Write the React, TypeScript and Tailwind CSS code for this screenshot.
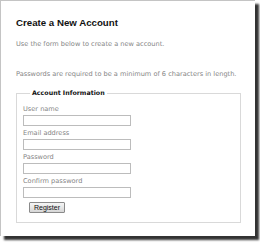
export default function App() {
  const fields = ["User name", "Email address", "Password", "Confirm password"];

  return (
    <div className="w-[260px] h-[245px] bg-white">
      <div className="w-[255px] h-[236px] bg-white border-l border-t border-[#c4c4c4] shadow-[4px_4px_2px_rgba(0,0,0,0.8)] pl-[15px] pt-[17px]">
        <h1 className="text-[9.7px] leading-[10px] font-bold text-[#111] font-['Liberation_Sans',Arial,sans-serif]">
          Create a New Account
        </h1>
        <div className="font-['DejaVu_Sans',Verdana,sans-serif] text-[6.6px] leading-[8px] text-[#858585]">
          <p className="mt-[12px]">Use the form below to create a new account.</p>
          <p className="mt-[22px]">Passwords are required to be a minimum of 6 characters in length.</p>
        </div>
        <fieldset className="mt-[11px] w-[225px] h-[134px] border border-[#d9d9d9] pl-[6px] font-['DejaVu_Sans',Verdana,sans-serif]">
          <legend className="ml-[7px] px-[2px] text-[6.3px] leading-[8px] font-bold text-[#111]">
            Account Information
          </legend>
          <div className="flex flex-col gap-[4px] mt-[9px]">
            {fields.map((f) => (
              <div key={f} className="flex flex-col gap-[2px]">
                <label className="text-[6.6px] leading-[7px] text-[#858585]">{f}</label>
                <input
                  type={f.toLowerCase().includes("password") ? "password" : "text"}
                  className="w-[108px] h-[11px] border border-[#bcbcbc] bg-white outline-none"
                />
              </div>
            ))}
          </div>
          <button className="block mt-[4px] ml-[6px] w-[36px] h-[11px] border border-[#8a8a8a] rounded-[1px] bg-gradient-to-b from-[#f6f6f6] to-[#d6d6d6] text-[7px] leading-[9px] text-[#111] font-['Liberation_Sans',Arial,sans-serif]">
            Register
          </button>
        </fieldset>
      </div>
    </div>
  );
}
